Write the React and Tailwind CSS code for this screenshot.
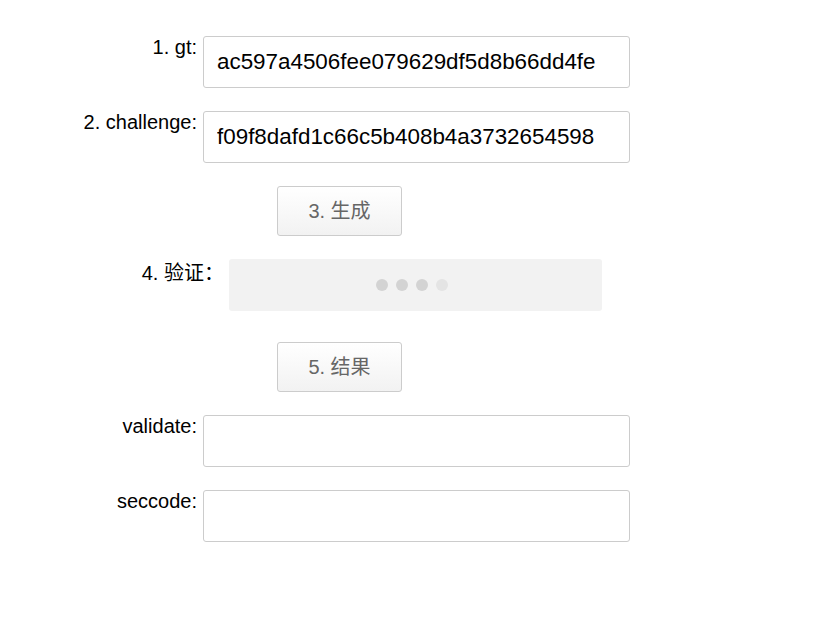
import React from "react";

const font = { fontFamily: '"Liberation Sans", Arial, "Noto Sans CJK SC", sans-serif' };

function Row({ label, value }) {
  return (
    <div className="flex">
      <label className="w-[197px] shrink-0 text-right text-[20px] leading-[23px] text-black">{label}</label>
      <input
        readOnly
        value={value}
        className="ml-[6px] w-[427px] h-[52px] border border-[#cccccc] rounded-[3px] bg-white pl-[13px] text-[22.4px] text-black outline-none"
      />
    </div>
  );
}

function Btn({ children }) {
  return (
    <div className="flex pl-[277px]">
      <button className="w-[125px] h-[50px] border border-[#cccccc] rounded-[3px] bg-gradient-to-b from-white to-[#f2f2f2] text-[20px] text-[#666666]">
        {children}
      </button>
    </div>
  );
}

export default function App() {
  return (
    <div className="w-[836px] h-[617px] bg-white pt-[36px]" style={font}>
      <div className="flex flex-col">
        <Row label="1. gt:" value="ac597a4506fee079629df5d8b66dd4fe" />
        <div className="mt-[23px]">
          <Row label="2. challenge:" value="f09f8dafd1c66c5b408b4a3732654598" />
        </div>
        <div className="mt-[23px]">
          <Btn>3. 生成</Btn>
        </div>
        <div className="mt-[23px] flex">
          <div className="w-[224px] shrink-0 text-right text-[20px] leading-[23px] pt-[3px] text-black">4. 验证：</div>
          <div className="ml-[5px] w-[373px] h-[52px] rounded-[3px] bg-[#f2f2f2] flex items-center justify-center gap-[8px] pr-[7px]">
            <span className="w-[12px] h-[12px] rounded-full bg-[#d3d3d3]" />
            <span className="w-[12px] h-[12px] rounded-full bg-[#d3d3d3]" />
            <span className="w-[12px] h-[12px] rounded-full bg-[#d3d3d3]" />
            <span className="w-[12px] h-[12px] rounded-full bg-[#e4e4e4]" />
          </div>
        </div>
        <div className="mt-[31px]">
          <Btn>5. 结果</Btn>
        </div>
        <div className="mt-[23px]">
          <Row label="validate:" value="" />
        </div>
        <div className="mt-[23px]">
          <Row label="seccode:" value="" />
        </div>
      </div>
    </div>
  );
}
